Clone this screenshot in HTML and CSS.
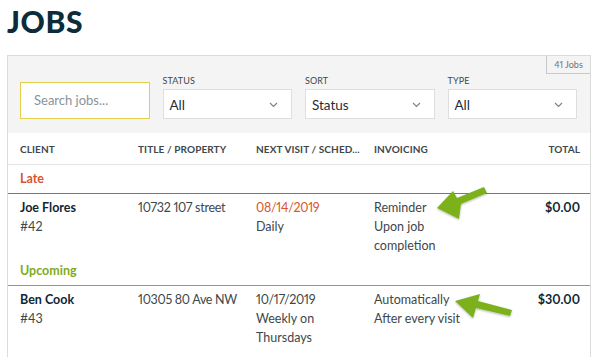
FILE: index.html
```html
<!DOCTYPE html>
<html>
<head>
<meta charset="utf-8">
<link rel="stylesheet" href="styles.css">
</head>
<body>
<h1 class="title">JOBS</h1>
<div class="card">
  <div class="badge">41 Jobs</div>
  <div class="filters">
    <div class="field">
      <div class="search">Search jobs...</div>
    </div>
    <div class="field">
      <div class="label">STATUS</div>
      <div class="select"><span>All</span><svg class="chev" width="9" height="6" viewBox="0 0 9 6"><path d="M1 1l3.5 3.5L8 1" fill="none" stroke="#7a8288" stroke-width="1.1"/></svg></div>
    </div>
    <div class="field">
      <div class="label">SORT</div>
      <div class="select"><span>Status</span><svg class="chev" width="9" height="6" viewBox="0 0 9 6"><path d="M1 1l3.5 3.5L8 1" fill="none" stroke="#7a8288" stroke-width="1.1"/></svg></div>
    </div>
    <div class="field">
      <div class="label">TYPE</div>
      <div class="select"><span>All</span><svg class="chev" width="9" height="6" viewBox="0 0 9 6"><path d="M1 1l3.5 3.5L8 1" fill="none" stroke="#7a8288" stroke-width="1.1"/></svg></div>
    </div>
  </div>
  <div class="row head">
    <div>CLIENT</div>
    <div>TITLE / PROPERTY</div>
    <div>NEXT VISIT / SCHED...</div>
    <div>INVOICING</div>
    <div class="right">TOTAL</div>
  </div>
  <div class="group late">Late</div>
  <div class="row item">
    <div><b class="name">Joe Flores</b><br>#42</div>
    <div class="num">10732 107 street</div>
    <div><span class="red num">08/14/2019</span><br>Daily</div>
    <div>Reminder<br>Upon job<br>completion</div>
    <div class="right"><b class="name">$0.00</b></div>
  </div>
  <div class="group upcoming">Upcoming</div>
  <div class="row item">
    <div><b class="name">Ben Cook</b><br>#43</div>
    <div class="num">10305 80 Ave NW</div>
    <div><span class="num">10/17/2019</span><br>Weekly on<br>Thursdays</div>
    <div>Automatically<br>After every visit</div>
    <div class="right"><b class="name">$30.00</b></div>
  </div>
</div>
<svg class="arrows" width="603" height="357" viewBox="0 0 603 357">
  <defs>
    <filter id="sh" x="-20%" y="-20%" width="140%" height="140%">
      <feGaussianBlur in="SourceAlpha" stdDeviation="1"/>
      <feOffset dx="0" dy="1"/>
      <feComponentTransfer><feFuncA type="linear" slope="0.3"/></feComponentTransfer>
      <feMerge><feMergeNode/><feMergeNode in="SourceGraphic"/></feMerge>
    </filter>
  </defs>
  <polygon filter="url(#sh)" fill="#7cb11c" points="437,208 453,191 457,198 484,187 487,193 461,204 459,219"/>
  <polygon filter="url(#sh)" fill="#7cb11c" points="455,301 480,294 478,301 512,310 510,316 476,308 473,318"/>
</svg>
</body>
</html>
```
FILE: styles.css
```css
html, body {
  margin: 0;
  padding: 0;
  background: #fff;
}
body {
  padding: 0 12px 0 7px;
  font-family: "Lato", "Liberation Sans", sans-serif;
  color: #3e474c;
  position: relative;
  font-variant-numeric: proportional-nums;
}
.title {
  margin: 0;
  padding-top: 5px;
  height: 50px;
  font-family: "Lato", sans-serif;
  font-weight: 900;
  font-size: 30px;
  line-height: 32px;
  color: #0c2c3b;
  letter-spacing: 0.6px;
}
.card {
  position: relative;
  border: 1px solid #dcdcdc;
  border-bottom: none;
  width: 582px;
  height: 310px;
  overflow: hidden;
}
.badge {
  position: absolute;
  top: 0;
  right: 0;
  width: 43px;
  height: 17px;
  line-height: 17px;
  text-align: center;
  font-size: 9px;
  color: #6b7378;
  background: #f4f4f4;
  border-left: 1px solid #c9c9c9;
  border-bottom: 1px solid #c9c9c9;
}
.filters {
  background: #f4f4f4;
  display: grid;
  grid-template-columns: repeat(4, 1fr);
  column-gap: 13px;
  align-items: end;
  padding: 19px 13px 14px 12px;
}
.field {
  display: flex;
  flex-direction: column;
}
.search {
  height: 35px;
  border: 1px solid #e3cf4c;
  background: #fff;
  color: #8a9398;
  font-size: 13px;
  line-height: 35px;
  padding-left: 13px;
}
.label {
  font-size: 9px;
  line-height: 11px;
  height: 11px;
  color: #3e474c;
  margin-bottom: 3px;
  letter-spacing: 0.1px;
}
.select {
  height: 26px;
  border: 1px solid #dedede;
  background: #fff;
  display: flex;
  align-items: center;
  justify-content: space-between;
  padding: 2px 13px 0 6px;
  font-size: 13.5px;
  color: #1f2d35;
}
.chev {
  display: block;
}
.row {
  display: grid;
  grid-template-columns: 118px 118px 118px 118px 1fr;
  padding: 0 10px 0 12px;
}
.right {
  text-align: right;
}
.head {
  height: 31px;
  align-items: center;
  border-bottom: 1px solid #e4e4e4;
  font-size: 10px;
  font-weight: 700;
  color: #3e474c;
  letter-spacing: 0.1px;
}
.group {
  height: 28px;
  line-height: 28px;
  padding-left: 12px;
  font-size: 12.5px;
  font-weight: 700;
}
.late {
  color: #d8552e;
  border-bottom: 1px solid #d8552e;
}
.upcoming {
  color: #7fab22;
  border-bottom: 1px solid #88b02d;
}
.item {
  padding-top: 4px;
  padding-bottom: 2px;
  font-size: 12.5px;
  line-height: 19px;
  color: #3e474c;
}
.num {
  letter-spacing: -0.3px;
}
.name {
  color: #0f2734;
  font-weight: 700;
}
.red {
  color: #d8552e;
}
.arrows {
  position: absolute;
  left: 0;
  top: 0;
  pointer-events: none;
}
```
